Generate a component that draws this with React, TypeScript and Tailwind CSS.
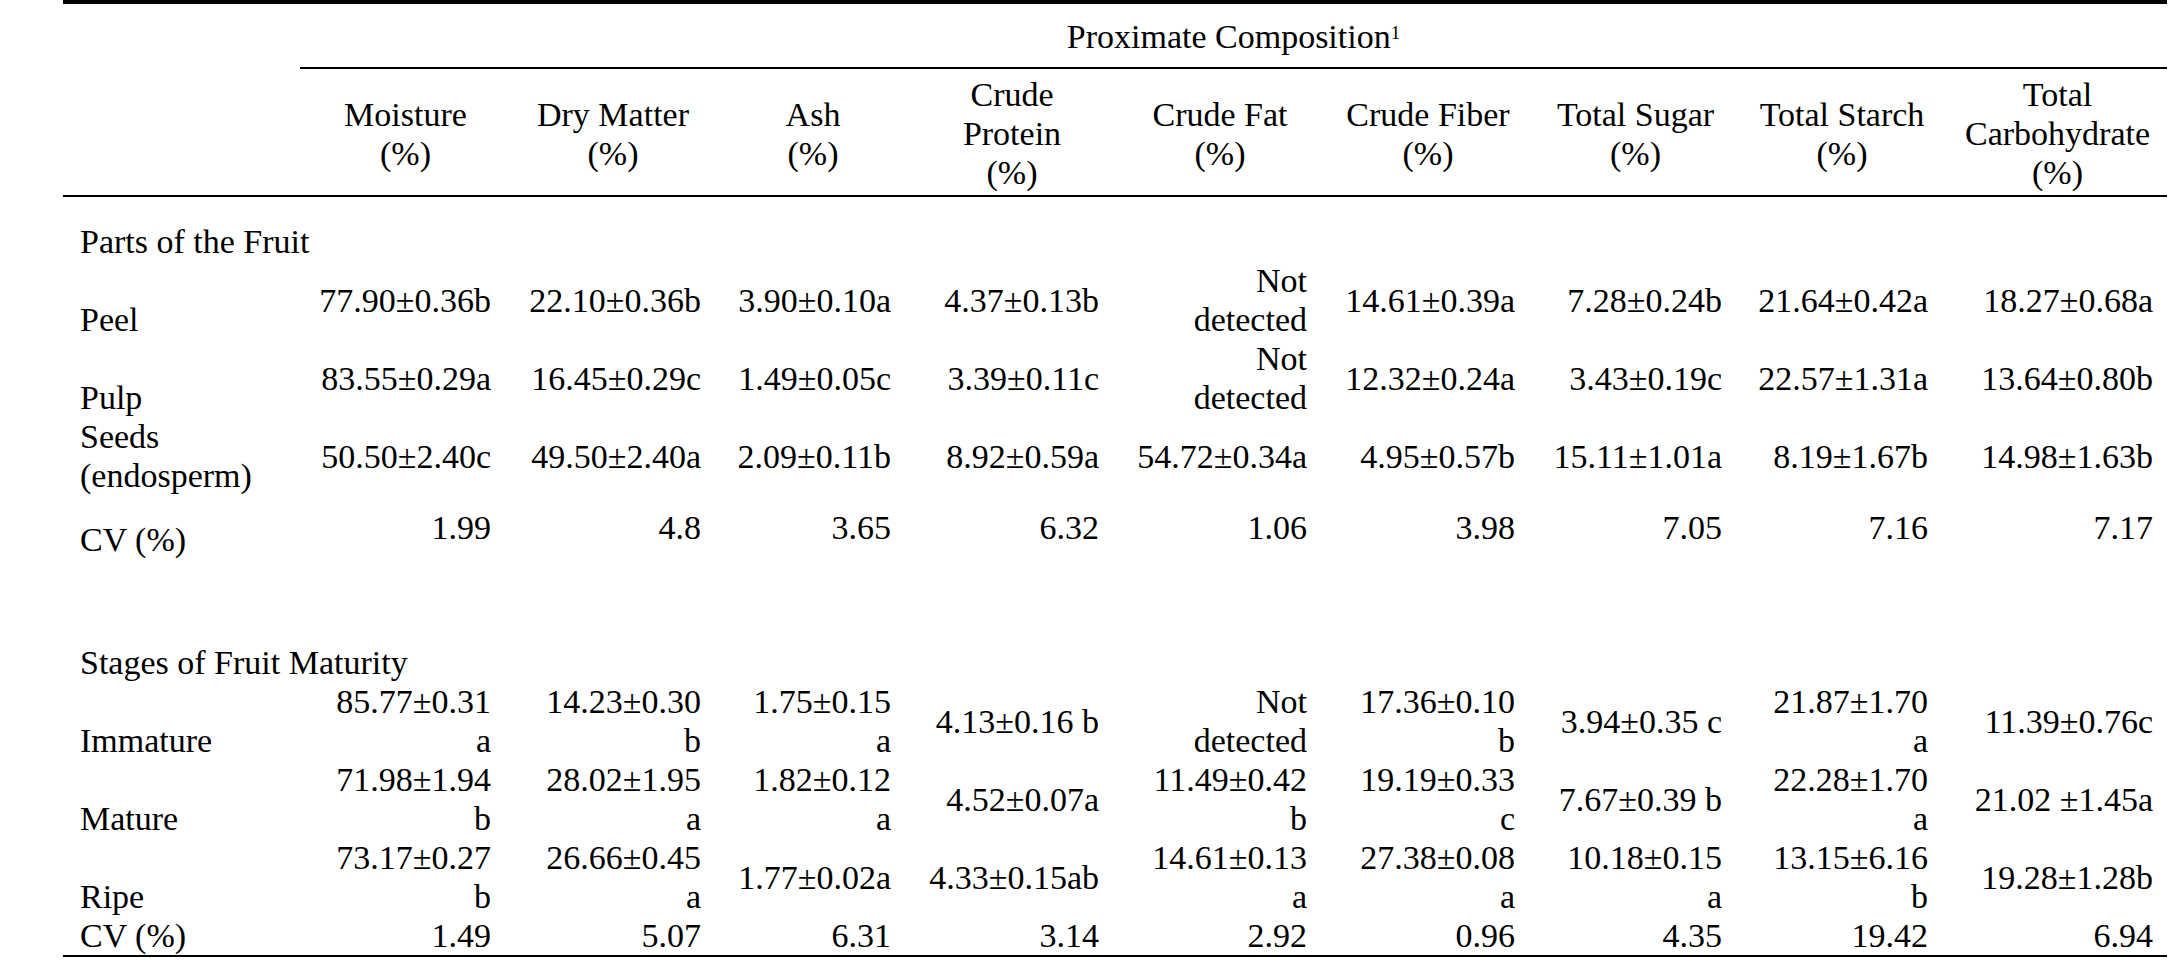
import React from "react";

const GRID =
  "grid grid-cols-[237px_205px_210px_190px_208px_208px_208px_207px_206px_225px]";

const headers = [
  "Moisture\n(%)",
  "Dry Matter\n(%)",
  "Ash\n(%)",
  "Crude\nProtein\n(%)",
  "Crude Fat\n(%)",
  "Crude Fiber\n(%)",
  "Total Sugar\n(%)",
  "Total Starch\n(%)",
  "Total\nCarbohydrate\n(%)",
];

type Row = { label: string; values: string[]; h?: string };

const parts: Row[] = [
  {
    label: "Peel",
    values: [
      "77.90±0.36b",
      "22.10±0.36b",
      "3.90±0.10a",
      "4.37±0.13b",
      "Not\ndetected",
      "14.61±0.39a",
      "7.28±0.24b",
      "21.64±0.42a",
      "18.27±0.68a",
    ],
  },
  {
    label: "Pulp",
    values: [
      "83.55±0.29a",
      "16.45±0.29c",
      "1.49±0.05c",
      "3.39±0.11c",
      "Not\ndetected",
      "12.32±0.24a",
      "3.43±0.19c",
      "22.57±1.31a",
      "13.64±0.80b",
    ],
  },
  {
    label: "Seeds\n(endosperm)",
    values: [
      "50.50±2.40c",
      "49.50±2.40a",
      "2.09±0.11b",
      "8.92±0.59a",
      "54.72±0.34a",
      "4.95±0.57b",
      "15.11±1.01a",
      "8.19±1.67b",
      "14.98±1.63b",
    ],
  },
];

const partsCv = ["1.99", "4.8", "3.65", "6.32", "1.06", "3.98", "7.05", "7.16", "7.17"];

const stages: Row[] = [
  {
    label: "Immature",
    values: [
      "85.77±0.31\na",
      "14.23±0.30\nb",
      "1.75±0.15\na",
      "4.13±0.16 b",
      "Not\ndetected",
      "17.36±0.10\nb",
      "3.94±0.35 c",
      "21.87±1.70\na",
      "11.39±0.76c",
    ],
  },
  {
    label: "Mature",
    values: [
      "71.98±1.94\nb",
      "28.02±1.95\na",
      "1.82±0.12\na",
      "4.52±0.07a",
      "11.49±0.42\nb",
      "19.19±0.33\nc",
      "7.67±0.39 b",
      "22.28±1.70\na",
      "21.02 ±1.45a",
    ],
  },
  {
    label: "Ripe",
    values: [
      "73.17±0.27\nb",
      "26.66±0.45\na",
      "1.77±0.02a",
      "4.33±0.15ab",
      "14.61±0.13\na",
      "27.38±0.08\na",
      "10.18±0.15\na",
      "13.15±6.16\nb",
      "19.28±1.28b",
    ],
  },
];

const stagesCv = ["1.49", "5.07", "6.31", "3.14", "2.92", "0.96", "4.35", "19.42", "6.94"];

function DataRow({ row, extra }: { row: Row; extra?: string }) {
  return (
    <div className={`${GRID} ${extra ?? ""}`}>
      <div className="flex flex-col justify-end pl-[17px] whitespace-pre-line">
        {row.label}
      </div>
      {row.values.map((v, i) => (
        <div
          key={i}
          className="flex flex-col justify-center items-end text-right pr-[14px] whitespace-pre-line"
        >
          {v}
        </div>
      ))}
    </div>
  );
}

export default function App() {
  return (
    <div className="w-[2183px] h-[964px] bg-white overflow-hidden">
      <div className="ml-[63px] w-[2104px] font-['Liberation_Serif',serif] text-[34px] leading-[39px] text-black">
        <div className="border-t-4 border-black" />
        {/* Header row 1 */}
        <div className={GRID}>
          <div />
          <div className="col-span-9 border-b-[2px] border-black text-center pt-[13px] pb-[11px]">
            Proximate Composition<sup className="text-[19px]">1</sup>
          </div>
        </div>
        {/* Header row 2 */}
        <div className={`${GRID} border-b-[2px] border-black`}>
          <div />
          {headers.map((h, i) => (
            <div
              key={i}
              className="flex flex-col justify-center text-center pl-[20px] pr-[14px] pt-[6px] pb-[3px] whitespace-pre-line"
            >
              {h}
            </div>
          ))}
        </div>

        <div className="pt-[25px]">
          <div className={GRID}>
            <div className="col-span-10 pl-[17px] whitespace-nowrap">Parts of the Fruit</div>
          </div>
          {parts.map((r, i) => (
            <DataRow key={i} row={r} />
          ))}
          <DataRow row={{ label: "CV (%)", values: partsCv }} extra="h-[64px]" />
          <div className="h-[84px]" />
          <div className={GRID}>
            <div className="col-span-10 pl-[17px] whitespace-nowrap">Stages of Fruit Maturity</div>
          </div>
          {stages.map((r, i) => (
            <DataRow key={i} row={r} />
          ))}
          <DataRow
            row={{ label: "CV (%)", values: stagesCv }}
            extra="border-b-[2px] border-black"
          />
        </div>
      </div>
    </div>
  );
}
